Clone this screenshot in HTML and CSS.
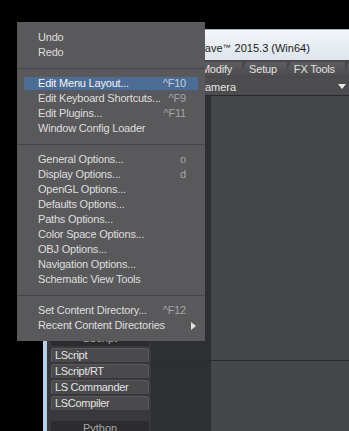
FILE: index.html
```html
<!DOCTYPE html>
<html lang="en">
<head>
    <meta charset="UTF-8">
    <meta name="viewport" content="width=device-width, initial-scale=1.0">
    <title>LightWave Edit Menu</title>
    <link rel="stylesheet" href="styles.css">
</head>
<body>
    <div class="desktop">
        <div class="app-window">
            <div class="titlebar">LightWave<span class="tm">™</span> 2015.3 (Win64)</div>
            <div class="tabbar">
                <span class="tab">Items</span>
                <span class="tab">Modify</span>
                <span class="tab">Setup</span>
                <span class="tab">FX Tools</span>
                <span class="tab">Utilities</span>
            </div>
            <div class="toolbar">
                <span>Camera</span>
                <span class="drop-arrow"></span>
            </div>
            <div class="workspace">
                <div class="side-panel">
                    <div class="group-head">LScript</div>
                    <button class="tool-btn">LScript</button>
                    <button class="tool-btn">LScript/RT</button>
                    <button class="tool-btn">LS Commander</button>
                    <button class="tool-btn">LSCompiler</button>
                    <div class="group-head python">Python</div>
                </div>
                <div class="view-area">
                    <div class="view-row top">
                        <div class="strip"></div>
                        <div class="viewport"></div>
                    </div>
                    <div class="view-row">
                        <div class="strip"></div>
                        <div class="viewport"></div>
                    </div>
                </div>
            </div>
        </div>

        <div class="popup-menu">
            <div class="menu-section first">
                <div class="menu-item"><span>Undo</span></div>
                <div class="menu-item"><span>Redo</span></div>
            </div>
            <div class="menu-section">
                <div class="menu-item active"><span>Edit Menu Layout...</span><span class="key">^F10</span></div>
                <div class="menu-item"><span>Edit Keyboard Shortcuts...</span><span class="key">^F9</span></div>
                <div class="menu-item"><span>Edit Plugins...</span><span class="key">^F11</span></div>
                <div class="menu-item"><span>Window Config Loader</span></div>
            </div>
            <div class="menu-section">
                <div class="menu-item"><span>General Options...</span><span class="key">o</span></div>
                <div class="menu-item"><span>Display Options...</span><span class="key">d</span></div>
                <div class="menu-item"><span>OpenGL Options...</span></div>
                <div class="menu-item"><span>Defaults Options...</span></div>
                <div class="menu-item"><span>Paths Options...</span></div>
                <div class="menu-item"><span>Color Space Options...</span></div>
                <div class="menu-item"><span>OBJ Options...</span></div>
                <div class="menu-item"><span>Navigation Options...</span></div>
                <div class="menu-item"><span>Schematic View Tools</span></div>
            </div>
            <div class="menu-section">
                <div class="menu-item"><span>Set Content Directory...</span><span class="key">^F12</span></div>
                <div class="menu-item"><span>Recent Content Directories</span><span class="key"></span><span class="submenu-arrow"></span></div>
            </div>
        </div>
    </div>
</body>
</html>
```

FILE: styles.css
```css
body {
    margin: 0;
    background-color: #000;
    font-family: "Liberation Sans", Arial, sans-serif;
    font-size: 11px;
}
.desktop {
    position: relative;
    width: 349px;
    height: 431px;
    overflow: hidden;
    background-color: #000;
}

/* main window behind the menu */
.app-window {
    position: absolute;
    left: 43px;
    top: 29px;
    width: 306px;
    height: 410px;
    border-left: 4px solid #b7cfe9;
    display: flex;
    flex-direction: column;
    background-color: #3a3a3c;
}
.titlebar {
    height: 31px;
    box-sizing: border-box;
    padding: 11px 0 0 124px;
    border-top: 1px solid #9fb3c8;
    background: linear-gradient(#f4f7fb, #dde4ec);
    color: #1b1b1b;
    line-height: 14px;
    white-space: nowrap;
}
.tm {
    font-size: 8px;
    vertical-align: 2px;
    margin-right: 1px;
}
.tabbar {
    height: 18px;
    box-sizing: border-box;
    padding: 2px 0 0 104px;
    display: flex;
    background-color: #48484a;
    white-space: nowrap;
}
.tab {
    height: 15px;
    line-height: 15px;
    margin-left: -3px;
    padding: 0 10px;
    clip-path: polygon(0 100%, 7px 0, 100% 0, 100% 100%);
    background: linear-gradient(#5e5e60, #4a4a4c);
    color: #e2e2e2;
    letter-spacing: -0.2px;
}
.toolbar {
    height: 17px;
    padding-left: 150px;
    display: flex;
    align-items: center;
    background-color: #4d4d4f;
    border-bottom: 1px solid #29292b;
    color: #e6e6e6;
}
.drop-arrow {
    margin-left: auto;
    margin-right: 7px;
    border-top: 5px solid #e8e8e8;
    border-left: 4px solid transparent;
    border-right: 4px solid transparent;
}
.workspace {
    flex: 1;
    display: flex;
}
.side-panel {
    width: 104px;
    box-sizing: border-box;
    padding: 235px 2px 0 4px;
    background-color: #39393b;
}
.group-head {
    height: 15px;
    line-height: 15px;
    margin-bottom: 2px;
    border-radius: 2px;
    background-color: #2c2c2e;
    color: #a8a8a8;
    text-align: center;
}
.group-head.python {
    margin-top: 10px;
}
.tool-btn {
    display: block;
    width: 100%;
    height: 15px;
    box-sizing: border-box;
    margin: 0 0 1px;
    padding: 0 3px;
    border: 1px solid #5a5a5c;
    border-bottom-color: #38383a;
    border-radius: 3px;
    background-color: #4a4a4c;
    color: #e4e4e4;
    font-family: inherit;
    font-size: 11px;
    line-height: 13px;
    letter-spacing: -0.3px;
    text-align: left;
}
.view-area {
    flex: 1;
    display: flex;
    flex-direction: column;
}
.view-row {
    display: flex;
    flex: 1;
}
.view-row.top {
    flex: none;
    height: 264px;
    border-bottom: 1px solid #2a2c2e;
}
.strip {
    width: 60px;
    background-color: #2e2f31;
}
.viewport {
    flex: 1;
    background-color: #45484b;
}

/* popup menu */
.popup-menu {
    position: absolute;
    left: 17px;
    top: 22px;
    width: 188px;
    padding-top: 2px;
    background-color: #59595b;
    color: #dedede;
    letter-spacing: -0.2px;
}
.menu-section {
    padding: 8px 0 7px;
    border-top: 1px solid #444446;
}
.menu-section.first {
    padding-top: 7px;
    border-top: none;
}
.menu-item {
    display: grid;
    grid-template-columns: 1fr auto 11px;
    align-items: center;
    height: 13px;
    line-height: 13px;
    margin: 0 7px 2px;
    padding: 0 1px 0 14px;
    white-space: nowrap;
}
.menu-item.active {
    background-color: #4b6c95;
    color: #f4f4f4;
}
.key {
    color: #a6a6a6;
    text-align: right;
}
.menu-item.active .key {
    color: #c4cfdd;
}
.submenu-arrow {
    justify-self: end;
    margin-right: 1px;
    border-left: 5px solid #e0e0e0;
    border-top: 4px solid transparent;
    border-bottom: 4px solid transparent;
}
```
